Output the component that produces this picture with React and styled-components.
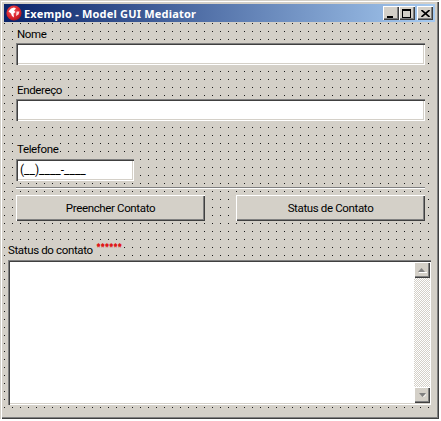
import React from "react";
import styled, { createGlobalStyle } from "styled-components";

const Global = createGlobalStyle`
  html, body { margin: 0; padding: 0; background: #fff; }
  * { box-sizing: border-box; }
`;

const face = "#d4d0c8";
const uiFont = `Roboto, "Liberation Sans", Arial, sans-serif`;

const Window = styled.div`
  width: 439px;
  height: 419px;
  display: flex;
  flex-direction: column;
  padding: 4px;
  background: ${face};
  box-shadow: inset 1px 1px 0 ${face}, inset 2px 2px 0 #fff, inset -1px -1px 0 #404040, inset -2px -2px 0 #808080;
`;

const TitleBar = styled.div`
  height: 18px;
  flex: none;
  display: flex;
  align-items: center;
  padding: 0 2px;
  background: linear-gradient(90deg, #0a246a, #a6caf0);
`;

const TitleText = styled.span`
  margin-left: 2px;
  color: #fff;
  font: bold 11px "Noto Sans", Tahoma, sans-serif;
  letter-spacing: 0.2px;
  white-space: nowrap;
`;

const Caption = styled.div`
  margin-left: auto;
  display: flex;
`;

const CaptionButton = styled.div`
  width: 16px;
  height: 14px;
  margin-left: ${(p) => (p.$gap ? 2 : 0)}px;
  display: flex;
  align-items: center;
  justify-content: center;
  background: ${face};
  box-shadow: inset 1px 1px 0 #fff, inset -1px -1px 0 #404040, inset -2px -2px 0 #808080;
`;

const Client = styled.div`
  flex: 1;
  display: flex;
  flex-direction: column;
  padding-top: 5px;
  background-color: ${face};
  background-image: radial-gradient(circle at 0.5px 0.5px, #1a1a1a 0.7px, transparent 0.71px);
  background-size: 8px 8px;
  background-position: 0 1px;
`;

const Form = styled.div`
  display: flex;
  flex-direction: column;
  margin: 0 10px 0 12px;
`;

const Label = styled.label`
  align-self: flex-start;
  height: 14px;
  margin-top: ${(p) => p.$top || 0}px;
  padding: 0 1px;
  background: ${face};
  color: #000;
  font: 11.5px/14px ${uiFont};
  letter-spacing: -0.36px;
  white-space: nowrap;
`;

const TextField = styled.input`
  display: block;
  width: ${(p) => p.$width || "100%"};
  height: 22px;
  margin: ${(p) => p.$gap || 2}px 0 0;
  padding: 0 4px;
  border: 0;
  outline: 0;
  border-radius: 0;
  background: #fff;
  color: #000;
  font: 12px ${uiFont};
  box-shadow: inset 1px 1px 0 #808080, inset 2px 2px 0 #404040, inset -1px -1px 0 #fff, inset -2px -2px 0 ${face};
`;

const Divider = styled.div`
  height: 2px;
  margin-top: 6px;
  background: linear-gradient(#808080 50%, #fff 50%);
`;

const ButtonRow = styled.div`
  display: flex;
  justify-content: space-between;
  margin-top: 6px;
`;

const PushButton = styled.button`
  width: 189px;
  height: 26px;
  padding: 0;
  border: 0;
  border-radius: 0;
  background: ${face};
  color: #000;
  font: 11.5px ${uiFont};
  letter-spacing: -0.36px;
  box-shadow: inset 1px 1px 0 #fff, inset -1px -1px 0 #404040, inset -2px -2px 0 #808080;
`;

const StatusSection = styled.div`
  display: flex;
  flex-direction: column;
  margin: 22px 4px 0;
`;

const StatusHeader = styled.div`
  display: flex;
  align-items: flex-start;
  height: 14px;
`;

const StatusLabel = styled(Label)`
  padding: 0;
`;

const Required = styled.span`
  margin: -1px 0 0 3px;
  padding: 0 1px;
  height: 8px;
  background: ${face};
  color: #e01818;
  font: bold 9px/9px "Liberation Sans", Arial, sans-serif;
  letter-spacing: 0.75px;
  text-shadow: 0 1px 0 #e01818;
`;

const TextBox = styled.div`
  height: 145px;
  margin-top: 3px;
  padding: 2px 1px 2px 2px;
  display: flex;
  background: #fff;
  box-shadow: inset 1px 1px 0 #808080, inset 2px 2px 0 #404040, inset -1px -1px 0 #fff, inset -2px -2px 0 ${face};
`;

const TextContent = styled.div`
  flex: 1;
  background: #fff;
`;

const ScrollBar = styled.div`
  width: 16px;
  display: flex;
  flex-direction: column;
`;

const ScrollButton = styled.div`
  height: 16px;
  flex: none;
  display: flex;
  align-items: center;
  justify-content: center;
  background: ${face};
  box-shadow: inset 1px 1px 0 #fff, inset -1px -1px 0 #404040, inset -2px -2px 0 #808080;
`;

const ScrollTrack = styled.div`
  flex: 1;
  background: repeating-conic-gradient(${face} 0 25%, #fff 0 50%) 0 0 / 2px 2px;
`;

const AppIcon = () => (
  <svg width="16" height="16" viewBox="0 0 16 16">
    <defs>
      <radialGradient id="ball" cx="0.4" cy="0.35" r="0.75">
        <stop offset="0" stopColor="#f0555a" />
        <stop offset="0.65" stopColor="#d92027" />
        <stop offset="1" stopColor="#8c1420" />
      </radialGradient>
    </defs>
    <circle cx="8" cy="8" r="7.6" fill="url(#ball)" />
    <path d="M2.5 6.5 L5 3.5 L8 2.5 L10 3.5 L8 5.5 L9.5 7 L7.5 8.5 L8 12.5 L6 11 L5 8.5 Z" fill="#fff" />
    <path d="M10.5 6.5 L13.5 6.5 L12.5 9.5 L10 11 Z" fill="#fbd8d8" />
  </svg>
);

const Arrow = ({ down }) => (
  <svg width="9" height="6" viewBox="0 0 9 6">
    {down ? (
      <>
        <path d="M1 1 H8 L4.5 5 Z" fill="#808080" />
        <path d="M5 5 L8 2 V3 L6 5 Z" fill="#fff" />
      </>
    ) : (
      <>
        <path d="M0 5 H7 L3.5 1 Z" fill="#808080" />
        <path d="M1 5 H9 V6 H1 Z" fill="#fff" />
      </>
    )}
  </svg>
);

export default function App() {
  return (
    <>
      <Global />
      <Window>
        <TitleBar>
          <AppIcon />
          <TitleText>Exemplo - Model GUI Mediator</TitleText>
          <Caption>
            <CaptionButton>
              <svg width="10" height="9" viewBox="0 0 10 9"><rect x="1" y="7" width="6" height="2" fill="#000" /></svg>
            </CaptionButton>
            <CaptionButton>
              <svg width="10" height="9" viewBox="0 0 10 9"><path d="M0 0 H9 V9 H0 Z M1 2 V8 H8 V2 Z" fill="#000" fillRule="evenodd" /></svg>
            </CaptionButton>
            <CaptionButton $gap>
              <svg width="9" height="7" viewBox="0 0 9 7"><path d="M0.5 0 L8.5 7 M8.5 0 L0.5 7" stroke="#000" strokeWidth="1.6" /></svg>
            </CaptionButton>
          </Caption>
        </TitleBar>
        <Client>
          <Form>
            <Label>Nome</Label>
            <TextField readOnly value="" />
            <Label $top={18}>Endereço</Label>
            <TextField readOnly value="" />
            <Label $top={21}>Telefone</Label>
            <TextField readOnly value="(__)____-____" $width="118px" $gap={3} />
            <Divider />
            <ButtonRow>
              <PushButton>Preencher Contato</PushButton>
              <PushButton>Status de Contato</PushButton>
            </ButtonRow>
          </Form>
          <StatusSection>
            <StatusHeader>
              <StatusLabel>Status do contato</StatusLabel>
              <Required>******</Required>
            </StatusHeader>
            <TextBox>
              <TextContent />
              <ScrollBar>
                <ScrollButton><Arrow /></ScrollButton>
                <ScrollTrack />
                <ScrollButton><Arrow down /></ScrollButton>
              </ScrollBar>
            </TextBox>
          </StatusSection>
        </Client>
      </Window>
    </>
  );
}
